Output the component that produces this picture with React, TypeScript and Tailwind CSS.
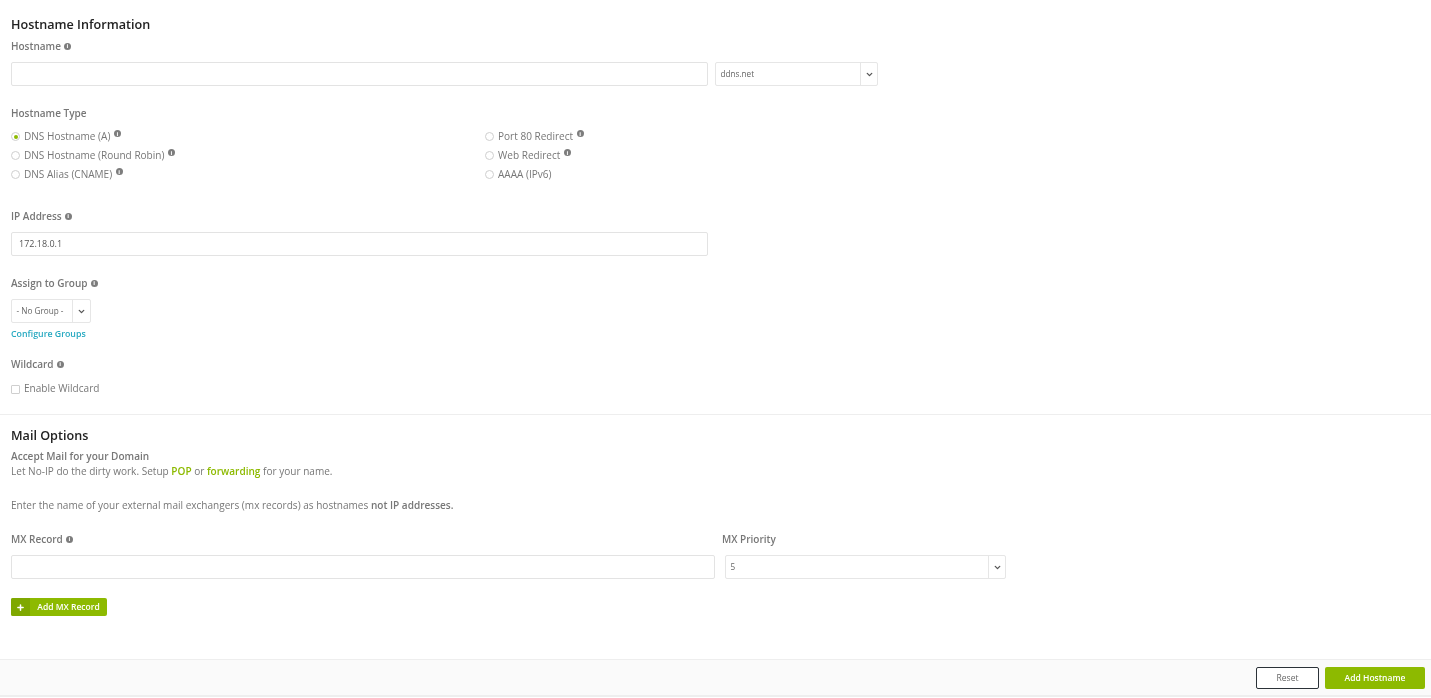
import { ChevronDown, Plus } from 'lucide-react';

const Tip = ({ raised = false }: { raised?: boolean }) => (
  <span
    className={`inline-flex h-[7px] w-[7px] items-center justify-center rounded-full bg-[#7d7d7d] text-[6px] font-bold leading-none text-white ${
      raised ? 'relative -top-[3px] ml-[3.5px]' : 'ml-[3px]'
    }`}
  >
    i
  </span>
);

const Label = ({ children, tip = true }: { children: string; tip?: boolean }) => (
  <div className="flex h-[14px] items-center text-[10px] font-semibold leading-[14px] text-[#777777]">
    {children}
    {tip && <Tip />}
  </div>
);

const Radio = ({ label, checked = false, tip = true }: { label: string; checked?: boolean; tip?: boolean }) => (
  <div className="flex h-[19px] items-center text-[10.06px] text-[#777777]">
    <span className="mr-[4px] flex h-[9px] w-[9px] items-center justify-center rounded-full border border-[#cfcfcf] bg-white">
      {checked && <span className="h-[4px] w-[4px] rounded-full bg-[#8dba00]" />}
    </span>
    {label}
    {tip && <Tip raised />}
  </div>
);

const Select = ({ value, className, arrowWidth }: { value: string; className: string; arrowWidth: string }) => (
  <div className={`flex h-[24px] items-stretch rounded-[2px] border border-[#e6e6e6] bg-white text-[8.2px] text-[#666666] ${className}`}>
    <div className="flex flex-1 items-center pl-[4.5px]">{value}</div>
    <div className={`flex items-center justify-center border-l border-[#e6e6e6] ${arrowWidth}`}>
      <ChevronDown size={9} strokeWidth={3.5} color="#555555" />
    </div>
  </div>
);

const Input = ({ value = '', className }: { value?: string; className: string }) => (
  <div className={`flex h-[24px] items-center rounded-[2px] border border-[#e3e3e3] bg-white pl-[7px] text-[9px] text-[#555555] ${className}`}>
    {value}
  </div>
);

export default function App() {
  return (
    <div className="flex h-[698px] w-[1431px] flex-col overflow-hidden bg-white font-['Open_Sans',sans-serif] blur-[0.35px]">
      {/* Hostname section */}
      <section className="h-[415px] border-b border-[#eeeeee] pl-[11px] pt-[16px]">
        <h2 className="h-[18px] text-[12.6px] font-semibold leading-[18px] text-[#222222]">Hostname Information</h2>
        <div className="mt-[5px]">
          <Label>Hostname</Label>
        </div>
        <div className="mt-[9px] flex gap-[7px]">
          <Input className="w-[697px]" />
          <Select value="ddns.net" className="w-[163px]" arrowWidth="w-[17px]" />
        </div>

        <div className="mt-[20px]">
          <Label tip={false}>Hostname Type</Label>
        </div>
        <div className="mt-[7px] flex">
          <div className="w-[474px]">
            <Radio label="DNS Hostname (A)" checked />
            <Radio label="DNS Hostname (Round Robin)" />
            <Radio label="DNS Alias (CNAME)" />
          </div>
          <div>
            <Radio label="Port 80 Redirect" />
            <Radio label="Web Redirect" />
            <Radio label="AAAA (IPv6)" tip={false} />
          </div>
        </div>

        <div className="mt-[25px]">
          <Label>IP Address</Label>
        </div>
        <Input value="172.18.0.1" className="mt-[9px] w-[697px]" />

        <div className="mt-[20px]">
          <Label>Assign to Group</Label>
        </div>
        <Select value="- No Group -" className="mt-[9px] w-[80px]" arrowWidth="w-[18px]" />
        <div className="mt-[5px] h-[12px] text-[8.8px] font-semibold leading-[12px] text-[#27a9c1]">Configure Groups</div>

        <div className="mt-[17px]">
          <Label>Wildcard</Label>
        </div>
        <div className="mt-[11px] flex h-[14px] items-center text-[10.06px] text-[#777777]">
          <span className="mr-[4px] h-[9px] w-[9px] rounded-[1px] border border-[#cfcfcf] bg-white" />
          Enable Wildcard
        </div>
      </section>

      {/* Mail options */}
      <section className="flex-1 pl-[11px] pt-[12px]">
        <h2 className="h-[18px] text-[12.6px] font-semibold leading-[18px] text-[#222222]">Mail Options</h2>
        <div className="mt-[4px] text-[10.06px] font-semibold leading-[15px] text-[#777777]">Accept Mail for your Domain</div>
        <p className="text-[10.06px] leading-[15px] text-[#777777]">
          Let No-IP do the dirty work. Setup <span className="font-semibold text-[#8dba00]">POP</span> or{' '}
          <span className="font-semibold text-[#8dba00]">forwarding</span> for your name.
        </p>
        <p className="mt-[19px] text-[10.06px] leading-[15px] text-[#777777]">
          Enter the name of your external mail exchangers (mx records) as hostnames{' '}
          <span className="font-semibold">not IP addresses.</span>
        </p>

        <div className="mt-[19px] flex h-[14px]">
          <div className="w-[711px]">
            <Label>MX Record</Label>
          </div>
          <Label tip={false}>MX Priority</Label>
        </div>
        <div className="mt-[9px] flex gap-[10px]">
          <Input className="w-[704px]" />
          <Select value="5" className="w-[281px]" arrowWidth="w-[17px]" />
        </div>

        <button className="mt-[19px] flex h-[18px] w-[96px] items-stretch overflow-hidden rounded-[2px] bg-[#8dba00] text-[8.5px] font-semibold text-white">
          <span className="flex w-[19px] items-center justify-center bg-[#7fa800]">
            <Plus size={9} strokeWidth={4} />
          </span>
          <span className="flex flex-1 items-center justify-center">Add MX Record</span>
        </button>
      </section>

      {/* Footer actions */}
      <footer className="flex h-[36px] items-start justify-end gap-[6px] border-t border-[#eeeeee] bg-[#fafafa] pr-[6px] pt-[7px]">
        <button className="h-[22px] w-[63px] rounded-[2px] border-[1.5px] border-[#2b3238] bg-white text-[8.5px] text-[#666666]">Reset</button>
        <button className="h-[22px] w-[100px] rounded-[2px] bg-[#8dba00] text-[8.5px] font-semibold text-white">Add Hostname</button>
      </footer>
      <div className="h-[2px] bg-[#eeeeee]" />
      <div className="h-[1px] bg-white" />
    </div>
  );
}
